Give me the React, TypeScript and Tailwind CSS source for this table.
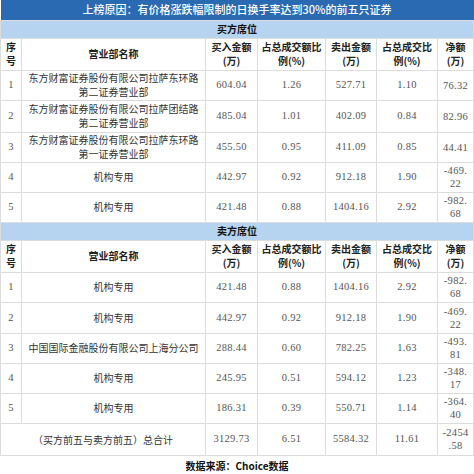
import React from 'react';

type Row = {
  no: string;
  name: string[];
  buy: string;
  buyPct: string;
  sell: string;
  sellPct: string;
  net: string[];
  h?: string;
};

const buyRows: Row[] = [
  { no: '1', name: ['东方财富证券股份有限公司拉萨东环路', '第二证券营业部'], buy: '604.04', buyPct: '1.26', sell: '527.71', sellPct: '1.10', net: ['76.32'] },
  { no: '2', name: ['东方财富证券股份有限公司拉萨团结路', '第二证券营业部'], buy: '485.04', buyPct: '1.01', sell: '402.09', sellPct: '0.84', net: ['82.96'], h: 'h-[32px]' },
  { no: '3', name: ['东方财富证券股份有限公司拉萨东环路', '第一证券营业部'], buy: '455.50', buyPct: '0.95', sell: '411.09', sellPct: '0.85', net: ['44.41'] },
  { no: '4', name: ['机构专用'], buy: '442.97', buyPct: '0.92', sell: '912.18', sellPct: '1.90', net: ['-469.', '22'] },
  { no: '5', name: ['机构专用'], buy: '421.48', buyPct: '0.88', sell: '1404.16', sellPct: '2.92', net: ['-982.', '68'] },
];

const sellRows: Row[] = [
  { no: '1', name: ['机构专用'], buy: '421.48', buyPct: '0.88', sell: '1404.16', sellPct: '2.92', net: ['-982.', '68'] },
  { no: '2', name: ['机构专用'], buy: '442.97', buyPct: '0.92', sell: '912.18', sellPct: '1.90', net: ['-469.', '22'], h: 'h-[31px]' },
  { no: '3', name: ['中国国际金融股份有限公司上海分公司'], buy: '288.44', buyPct: '0.60', sell: '782.25', sellPct: '1.63', net: ['-493.', '81'] },
  { no: '4', name: ['机构专用'], buy: '245.95', buyPct: '0.51', sell: '594.12', sellPct: '1.23', net: ['-348.', '17'] },
  { no: '5', name: ['机构专用'], buy: '186.31', buyPct: '0.39', sell: '550.71', sellPct: '1.14', net: ['-364.', '40'] },
];

const cell = 'border border-[#dcdcdc] text-center align-middle px-[3px]';
const num = "font-['Liberation_Serif',serif] text-[10.5px] text-[#555] tracking-[0.3px]";

const Lines = ({ items }: { items: string[] }) => (
  <>
    {items.map((t, i) => (
      <div key={i}>{t}</div>
    ))}
  </>
);

const Band = ({ label }: { label: string }) => (
  <tr className="h-[18px] bg-[#b6d3f0]">
    <td colSpan={7} className="border border-[#dcdcdc] text-center text-[10px] font-bold text-[#111] leading-none">
      {label}
    </td>
  </tr>
);

const Head = () => (
  <tr className="h-[32px] text-[10px] font-bold text-[#222] leading-[14px]">
    <td className={cell}>序<br />号</td>
    <td className={cell}>营业部名称</td>
    <td className={cell}>买入金额<br />(万)</td>
    <td className={cell}>占总成交额比<br />例(%)</td>
    <td className={cell}>卖出金额<br />(万)</td>
    <td className={cell}>占总成交比<br />例(%)</td>
    <td className={cell}>净额<br />(万)</td>
  </tr>
);

const DataRow = ({ r }: { r: Row }) => (
  <tr className={r.h ?? 'h-[30px]'}>
    <td className={`${cell} ${num}`}>{r.no}</td>
    <td className={`${cell} text-[10px] leading-[14px] text-[#333]`}>
      <Lines items={r.name} />
    </td>
    <td className={`${cell} ${num}`}>{r.buy}</td>
    <td className={`${cell} ${num}`}>{r.buyPct}</td>
    <td className={`${cell} ${num}`}>{r.sell}</td>
    <td className={`${cell} ${num}`}>{r.sellPct}</td>
    <td className={`${cell} ${num} leading-[13px]`}>
      <Lines items={r.net} />
    </td>
  </tr>
);

export default function App() {
  return (
    <div className="w-[474px] h-[474px] bg-white font-['Noto_Sans_CJK_SC',sans-serif] overflow-hidden">
      <table className="w-[473px] table-fixed border-collapse">
        <colgroup>
          <col className="w-[21px]" />
          <col className="w-[184px]" />
          <col className="w-[52px]" />
          <col className="w-[68px]" />
          <col className="w-[51px]" />
          <col className="w-[61px]" />
          <col className="w-[36px]" />
        </colgroup>
        <tbody>
          <tr className="h-[20px] bg-[#2a6ab3]">
            <td colSpan={7} className="text-center text-[11px] font-medium text-white leading-none">
              上榜原因：有价格涨跌幅限制的日换手率达到30%的前五只证券
            </td>
          </tr>
          <Band label="买方席位" />
          <Head />
          {buyRows.map((r) => (
            <DataRow key={'b' + r.no} r={r} />
          ))}
          <Band label="卖方席位" />
          <Head />
          {sellRows.map((r) => (
            <DataRow key={'s' + r.no} r={r} />
          ))}
          <tr className="h-[32px]">
            <td colSpan={2} className={`${cell} text-[10px] text-[#333]`}>（买方前五与卖方前五）总合计</td>
            <td className={`${cell} ${num}`}>3129.73</td>
            <td className={`${cell} ${num}`}>6.51</td>
            <td className={`${cell} ${num}`}>5584.32</td>
            <td className={`${cell} ${num}`}>11.61</td>
            <td className={`${cell} ${num} leading-[13px]`}>
              -2454<br />.58
            </td>
          </tr>
        </tbody>
      </table>
      <div className="h-[19px] flex items-center justify-center text-[10px] font-bold text-[#111]">
        数据来源：Choice数据
      </div>
    </div>
  );
}
